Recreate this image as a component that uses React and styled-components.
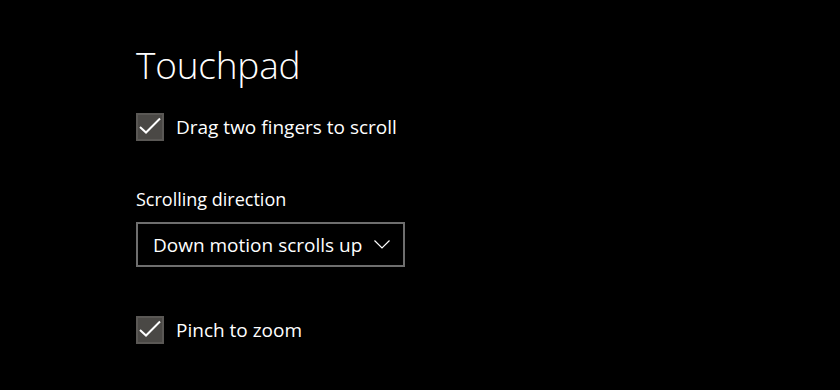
import React, { useState } from 'react'
import styled, { createGlobalStyle } from 'styled-components'

const GlobalStyle = createGlobalStyle`
  html, body {
    margin: 0;
    padding: 0;
    background: #000;
  }
  body {
    font-family: "Open Sans", "Noto Sans", sans-serif;
    color: #fff;
  }
`

const Page = styled.div`
  width: 840px;
  height: 390px;
  box-sizing: border-box;
  padding: 41px 0 0 136px;
  background: #000;
  display: flex;
  flex-direction: column;
  align-items: flex-start;
`

const Title = styled.h1`
  margin: 0;
  font-size: 37px;
  font-weight: 300;
  line-height: 48px;
  letter-spacing: -0.2px;
`

const CheckRow = styled.label`
  display: flex;
  align-items: center;
  gap: 12px;
  margin-top: ${p => p.top}px;
  cursor: pointer;
  font-size: 19px;
  line-height: 28px;
`

const Box = styled.span`
  width: 28px;
  height: 28px;
  box-sizing: border-box;
  border: 2px solid #5a5855;
  background: ${p => (p.checked ? '#4a4845' : 'transparent')};
  display: flex;
  align-items: center;
  justify-content: center;
`

const SectionLabel = styled.div`
  margin-top: 46px;
  font-size: 18px;
  line-height: 24px;
`

const Dropdown = styled.button`
  margin-top: 11px;
  width: 269px;
  height: 45px;
  box-sizing: border-box;
  border: 2px solid #6e6e6e;
  background: #000;
  color: #fff;
  font-family: inherit;
  font-size: 19px;
  display: flex;
  align-items: center;
  justify-content: space-between;
  padding: 0 13px 0 15px;
  cursor: pointer;
`

const Checkbox = ({ label, top, checked, onToggle }) => (
  <CheckRow top={top} onClick={onToggle}>
    <Box checked={checked}>
      {checked && (
        <svg width="24" height="20" viewBox="0 0 24 20">
          <path d="M2 10 L8 15.5 L22 1.5" fill="none" stroke="#fff" strokeWidth="2" />
        </svg>
      )}
    </Box>
    {label}
  </CheckRow>
)

export default function App () {
  const [drag, setDrag] = useState(true)
  const [pinch, setPinch] = useState(true)
  return (
    <Page>
      <GlobalStyle />
      <Title>Touchpad</Title>
      <Checkbox label='Drag two fingers to scroll' top={24} checked={drag} onToggle={() => setDrag(!drag)} />
      <SectionLabel>Scrolling direction</SectionLabel>
      <Dropdown>
        Down motion scrolls up
        <svg width="16" height="9" viewBox="0 0 16 9">
          <path d="M0.5 0.5 L8 8 L15.5 0.5" fill="none" stroke="#fff" strokeWidth="1.2" />
        </svg>
      </Dropdown>
      <Checkbox label='Pinch to zoom' top={49} checked={pinch} onToggle={() => setPinch(!pinch)} />
    </Page>
  )
}
